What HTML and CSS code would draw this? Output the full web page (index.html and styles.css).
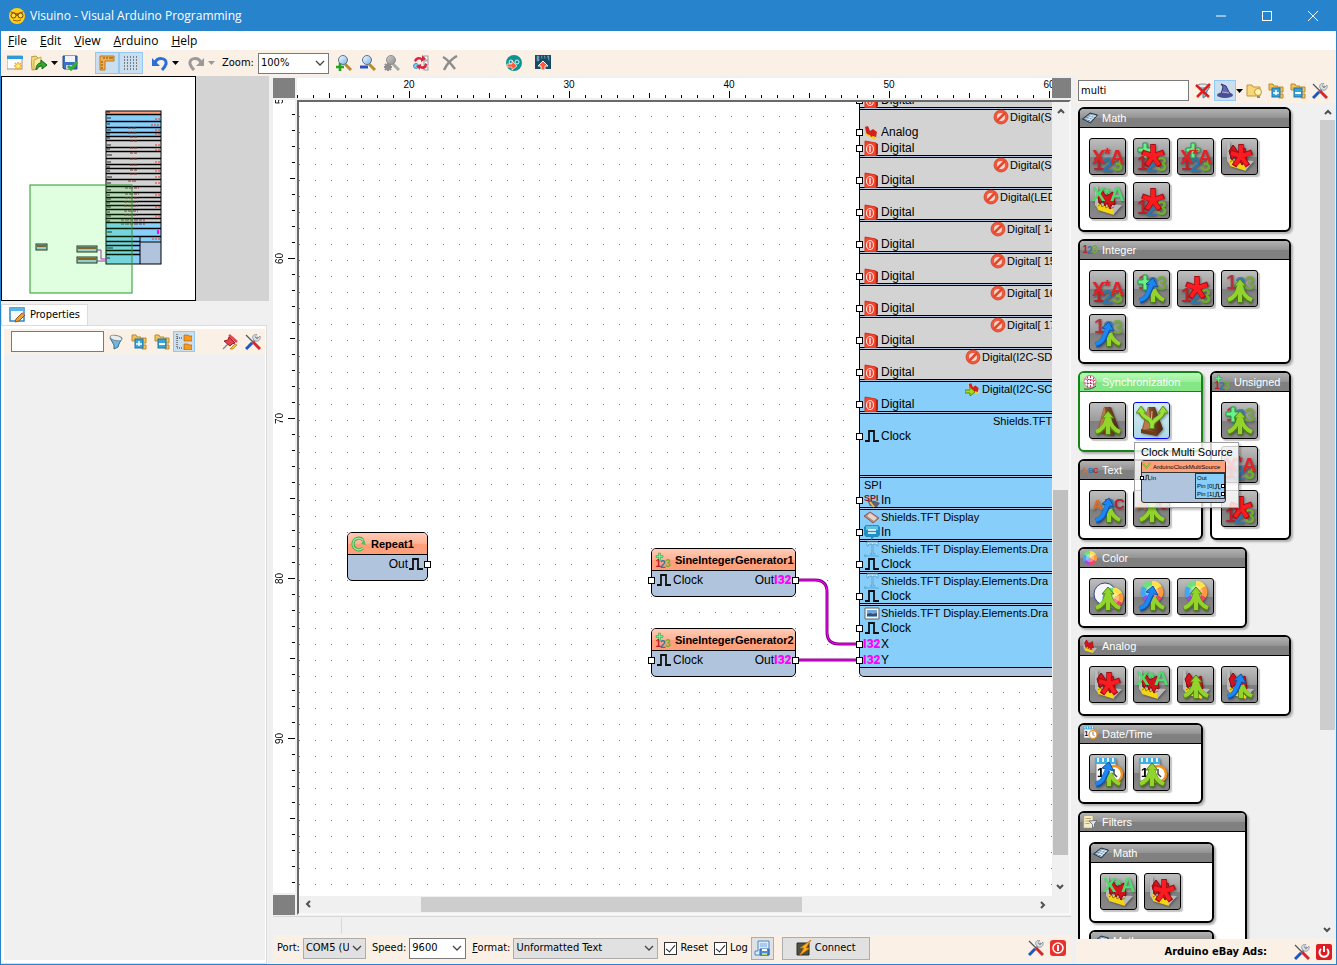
FILE: index.html
```html
<!doctype html>
<html lang="en">
<head>
  <meta charset="UTF-8">
  <meta name="viewport" content="width=device-width, initial-scale=1.0">
  <title>Visuino - Visual Arduino Programming</title>
  <link rel="stylesheet" href="styles.css">
</head>
<body>
  <svg class="paints" aria-hidden="true">
    <defs>
      <linearGradient id="g-lens" x1="0" y1="0" x2="1" y2="1"><stop offset="0" stop-color="#fff"/><stop offset="1" stop-color="#6fb0e8"/></linearGradient>
      <linearGradient id="g-gray" x1="0" y1="0" x2="1" y2="1"><stop offset="0" stop-color="#d0d0d0"/><stop offset="1" stop-color="#8c8c8c"/></linearGradient>
      <linearGradient id="g-wood" x1="0" y1="0" x2="1" y2="0"><stop offset="0" stop-color="#a5673c"/><stop offset="1" stop-color="#4a2410"/></linearGradient>
      <pattern id="dots" width="16" height="16" patternUnits="userSpaceOnUse" y="14"><rect width="1" height="1" fill="#808080"/></pattern>
    </defs>
  </svg>
  <svg class="sprite" aria-hidden="true">
    <!-- toolbar icons, 16px -->
    <symbol id="i-new" viewBox="0 0 16 16"><rect x="0" y="1" width="15" height="13" fill="#fff" stroke="#8a9aa8"/><rect x="0" y="1" width="16" height="3" fill="#2b9cd8"/><path d="M11 7v8M7 11h8M8 8l6 6M14 8l-6 6" stroke="#ffa21f" stroke-width="1.500"/><circle cx="11" cy="11" r="2" fill="#fff27a"/></symbol>
    <symbol id="i-open" viewBox="0 0 16 16"><path d="M0 2l5-1 2 2v11l-6 1z" fill="#f2d878" stroke="#b99a3c"/><path d="M3 15V5l7-3v9z" fill="#f9eca8" stroke="#c9aa48"/><path d="M5 15c0-5 2-7 5-7V5l6 5-5 4v-3c-3 0-4 1-6 4z" fill="#2faa30" stroke="#176a18"/></symbol>
    <symbol id="i-save" viewBox="0 0 16 16"><path d="M1 1h14v13H2l-1-1z" fill="#3f6fc0" stroke="#274a8a"/><path d="M3 1h10v6H3z" fill="#eef4fb"/><path d="M4 10h7v4H4z" fill="#c9d6e8"/><path d="M6 11l3 3 6-7" fill="none" stroke="#35b12f" stroke-width="3"/></symbol>
    <symbol id="i-ruler" viewBox="0 0 16 16"><path d="M1 1h14v5H6v9H1z" fill="#f3b04c" stroke="#bb7620"/><path d="M5 2v2M8 2v2M11 2v2M13 2v2M2 7h2M2 10h2M2 13h2" stroke="#7c4a0c"/></symbol>
    <symbol id="i-grid" viewBox="0 0 16 16"><path d="M1 2h15M1 5h15M1 8h15M1 11h15M1 14h15" stroke="#222" stroke-dasharray="1 2"/></symbol>
    <symbol id="i-undo" viewBox="0 0 16 16"><path d="M0 3v8h8z" fill="#2a6fd6"/><path d="M3 8c2-6 12-6 11 1-1 3-2 4-4 6" fill="none" stroke="#2a6fd6" stroke-width="3"/></symbol>
    <symbol id="i-redo" viewBox="0 0 16 16"><path d="M16 3v8H8z" fill="#9a9a9a"/><path d="M13 8C11 2 1 2 2 9c1 3 2 4 4 6" fill="none" stroke="#9a9a9a" stroke-width="3"/></symbol>
    <symbol id="i-zoomin" viewBox="0 0 16 16"><path d="M9 9l6 6" stroke="#b98a2e" stroke-width="3"/><circle cx="7" cy="5" r="4.500" fill="url(#g-lens)" stroke="#5a7188"/><path d="M4 8v8M0 12h8" stroke="#1fa51f" stroke-width="2.600"/></symbol>
    <symbol id="i-zoomout" viewBox="0 0 16 16"><path d="M9 9l6 6" stroke="#b98a2e" stroke-width="3"/><circle cx="7" cy="5" r="4.500" fill="url(#g-lens)" stroke="#5a7188"/><path d="M0 12h8" stroke="#2a4fc0" stroke-width="3"/></symbol>
    <symbol id="i-zoomoff" viewBox="0 0 16 16"><path d="M9 9l6 6" stroke="#a8a8a8" stroke-width="3"/><circle cx="7" cy="5" r="4.500" fill="url(#g-gray)" stroke="#8d8d8d"/><path d="M1 9l6 6M7 9l-6 6M4 8v8M0 12h8" stroke="#8d8d8d" stroke-width="2"/></symbol>
    <symbol id="i-swap" viewBox="0 0 16 16"><circle cx="3" cy="11" r="2.500" fill="#7fd0f2" stroke="#2f9fd0"/><rect x="11" y="1" width="4" height="4" fill="#fff" stroke="#999"/><rect x="11" y="6" width="4" height="4" fill="#fff" stroke="#999"/><rect x="11" y="12" width="4" height="3" fill="#fff" stroke="#999"/><path d="M1 6c1-4 5-5 8-3V0l4 4-5 3V5C5 4 4 5 3 7zM14 9c0 5-4 6-7 4v2l-4-4 5-2v2c3 1 4-1 4-3z" fill="#dd2340"/></symbol>
    <symbol id="i-delete" viewBox="0 0 16 16"><path d="M1 2c4 2 9 8 12 12M15 1C9 4 5 9 2 15" fill="none" stroke="#8c8c8c" stroke-width="2.500"/></symbol>
    <symbol id="i-arduino" viewBox="0 0 16 16"><circle cx="8" cy="8" r="8" fill="#0f9295"/><circle cx="5" cy="7" r="2" fill="none" stroke="#d8f2f2"/><circle cx="11" cy="7" r="2" fill="none" stroke="#d8f2f2"/><path d="M1 9h5V6l5 5-5 4v-3H1z" fill="#ff5a36" stroke="#fff3ee" stroke-width=".7"/></symbol>
    <symbol id="i-upload" viewBox="0 0 16 16"><path d="M0 0h16v14H0z" fill="#164a66"/><path d="M2 1h2v5H2zM6 1h1v3M9 1h1v3M12 1h2v5" fill="#6d9cb3" stroke="#6d9cb3" stroke-width=".5"/><path d="M6 15v-4H3l5-5 5 5h-3v4z" fill="#ff5a36" stroke="#fff3ee"/></symbol>
    <symbol id="i-props" viewBox="0 0 16 16"><path d="M1 1h14v13H1z" fill="#f5fafd" stroke="#2e86be" stroke-width="1.500"/><path d="M1 1h14v3H1z" fill="#56b4e6"/><path d="M6 15l1-3 6-6 3 2-6 6z" fill="#f0a030" stroke="#97591a"/><path d="M13 6l2-1 1 2-1 1z" fill="#d26fb4"/></symbol>
    <symbol id="i-funnel" viewBox="0 0 16 16"><path d="M2 4l4 7v4l4-2 1-3 3-6z" fill="#6fb9e0" stroke="#376d92"/><ellipse cx="8" cy="4" rx="6" ry="2.500" fill="#e8edf0" stroke="#7b8a94" transform="rotate(12 8 4)"/></symbol>
    <symbol id="i-expand" viewBox="0 0 16 16"><path d="M1 1h4l1 2h4v4H1z" fill="#f4c25c" stroke="#c08a26"/><path d="M11 4h4v5h-4zM11 11h4v4h-4z" fill="#f4c25c" stroke="#c08a26"/><rect x="4" y="5" width="8" height="9" fill="#37a4da" stroke="#1d74a8"/><path d="M8 7v5M5 10h6" stroke="#fff" stroke-width="1.500"/></symbol>
    <symbol id="i-collapse" viewBox="0 0 16 16"><path d="M1 1h4l1 2h4v4H1z" fill="#f4c25c" stroke="#c08a26"/><path d="M11 4h4v5h-4zM11 11h4v4h-4z" fill="#f4c25c" stroke="#c08a26"/><rect x="4" y="5" width="8" height="9" fill="#37a4da" stroke="#1d74a8"/><path d="M5 10h6" stroke="#fff" stroke-width="2"/></symbol>
    <symbol id="i-tree" viewBox="0 0 16 16"><path d="M1 0v14M1 4h6M1 14h6" fill="none" stroke="#333" stroke-dasharray="1 1"/><path d="M8 1h4l1 1h3v5H8zM8 10h4l1 1h3v5H8z" fill="#f79a1c" stroke="#b7630a" stroke-width=".7"/></symbol>
    <symbol id="i-pin" viewBox="0 0 16 16"><path d="M1 15l6-6" stroke="#888" stroke-width="1.500"/><path d="M7 3l6 6-3 1-2 2-6-5 4-1z" fill="#e3434c" stroke="#9d1c27"/><path d="M7 1l8 7" stroke="#e3434c" stroke-width="2.500"/><path d="M8 15l5-5 2 1-4 4z" fill="#f2c53d" stroke="#8e6c14" stroke-width=".6"/></symbol>
    <symbol id="i-tools" viewBox="0 0 16 16"><path d="M4 12L13 3" stroke="#8a939c" stroke-width="2"/><path d="M15 2l-3 3-2-2 2-3c-4 0-5 3-4 5l2 2c3 1 6-1 5-5z" fill="#d8dde2" stroke="#7b848d" stroke-width=".7"/><path d="M1 15l6-6" stroke="#1f56c4" stroke-width="3"/><path d="M1 1l7 7" stroke="#555" stroke-width="1.300"/><path d="M8 8l7 7" stroke="#d02a2a" stroke-width="3"/></symbol>
    <symbol id="i-clear" viewBox="0 0 16 16"><path d="M3 3l5 6v6l3-2 1-5 3-4z" fill="#8cc6e4" stroke="#54778e"/><ellipse cx="8" cy="3" rx="6" ry="2" fill="#e3e8ea" stroke="#7b8a94"/><path d="M1 2l13 12M15 1L2 14" stroke="#d8201c" stroke-width="2.500"/></symbol>
    <symbol id="i-wizard" viewBox="0 0 16 16"><path d="M4 11L6 4 4 1l5 2 4 8z" fill="#6668b0" stroke="#33346e"/><ellipse cx="8" cy="12" rx="8" ry="3" fill="#4c4e94"/><path d="M5 9l7 1" stroke="#b7b9e6"/></symbol>
    <symbol id="i-folder" viewBox="0 0 16 16"><path d="M1 2h5l1 2h7v9H1z" fill="#f8d67c" stroke="#c79630"/><circle cx="12" cy="9" r="3.500" fill="#fff3b0" stroke="#c79630"/><path d="M11 13h3v2h-3z" fill="#8a8a8a"/></symbol>
    <symbol id="i-power" viewBox="0 0 16 16"><rect width="16" height="16" rx="2" fill="#dd1d23"/><path d="M5 5a4.500 4.500 0 1 0 6 0" fill="none" stroke="#fff" stroke-width="2"/><path d="M8 2v6" stroke="#fff" stroke-width="2"/></symbol>
    <symbol id="i-stop" viewBox="0 0 16 16"><rect width="16" height="16" rx="3" fill="#e8302c"/><circle cx="8" cy="8" r="5" fill="none" stroke="#fff" stroke-width="1.500"/><path d="M8 5v6" stroke="#fff" stroke-width="2"/></symbol>
    <symbol id="i-log" viewBox="0 0 16 16"><path d="M4 1h11v14H1V11h3z" fill="#dcebfa" stroke="#4b86cc"/><path d="M6 4h7M6 6h7" stroke="#79aae0"/><path d="M6 9h9v6H6z" fill="#4f8ed8" stroke="#2b5fa4"/><path d="M8 9h5v2H8z" fill="#fff"/><path d="M8 13h5v2H8z" fill="#b9dd6c"/></symbol>
    <symbol id="i-connect" viewBox="0 0 16 16"><path d="M1 3h12v12H1z" fill="#4a5140" stroke="#2a2f25"/><path d="M15 0L4 8h4l-5 8L14 8h-4z" fill="#ffb31a" stroke="#c2660a" stroke-width=".7"/></symbol>
    <symbol id="i-caret" viewBox="0 0 7 4"><path d="M0 0h7L3.500 4z" fill="currentColor"/></symbol>
    <symbol id="i-chevron" viewBox="0 0 10 6"><path d="M1 1l4 4 4-4" fill="none" stroke="currentColor" stroke-width="1.300"/></symbol>
    <symbol id="i-arrow" viewBox="0 0 8 6"><path d="M1 5l3-3 3 3" fill="none" stroke="#505050" stroke-width="2"/></symbol>

    <!-- pin and slot icons -->
    <symbol id="p-clock" viewBox="0 0 16 16"><path d="M1 13h4V3h5v10h5" fill="none" stroke="#111" stroke-width="1.800"/></symbol>
    <symbol id="p-digital" viewBox="0 0 16 16"><path d="M1 1l11 2v13H1z" fill="#f4452c" stroke="#d9301a"/><path d="M12 3l2 1v10l-2 2z" fill="#b32312"/><ellipse cx="6" cy="9" rx="3.500" ry="4.500" fill="none" stroke="#ffe0da" stroke-width="1.200"/><path d="M6 6v6" stroke="#ffe0da" stroke-width="1.500"/></symbol>
    <symbol id="p-analog" viewBox="0 0 16 16"><path d="M0 1l1 9 12 5 3-2" fill="#ccc"/><path d="M1 8l10 4v4L2 11z" fill="#f5d312"/><path d="M1 3l3-1 2 5 3-2 4 3-1 5-3-1-2 1-1-2-3-1-1-2z" fill="#d42020"/></symbol>
    <symbol id="p-out" viewBox="0 0 16 16"><use href="#p-analog" x="3" width="13" height="14"/><path d="M0 9h5V6l5 5-5 4v-3H0z" fill="#a6d820" stroke="#5d8a10"/></symbol>
    <symbol id="p-no" viewBox="0 0 16 16"><circle cx="8" cy="8" r="5.500" fill="#fbd9d2" stroke="#f0593c" stroke-width="3"/><circle cx="8" cy="8" r="7" fill="none" stroke="#c93a22" stroke-width=".7"/><path d="M4 12l8-8" stroke="#e0492e" stroke-width="2.500"/></symbol>
    <symbol id="p-spi" viewBox="0 0 16 16"><path d="M3 8l8 1 5 2-3 4-7-1z" fill="#5c5f73"/><path d="M6 10l4 5" stroke="#f0c040" stroke-width="2"/><text x="0" y="9" class="t-spi">SPI</text></symbol>
    <symbol id="p-chip" viewBox="0 0 16 16"><path d="M0 7l6-4 9 6-6 5z" fill="#b98577" stroke="#8a6055"/><path d="M3 7l3-3 7 5-3 3z" fill="#e6d5cf"/></symbol>
    <symbol id="p-chat" viewBox="0 0 16 16"><path d="M2 1h12l2 2v8l-2 2h-4l-3 3v-3H2l-2-2V3z" fill="#1f8fc4"/><path d="M2 2h12v4H2z" fill="#5fc0e6"/><path d="M4 6h8M4 9h8" stroke="#fff" stroke-width="1.300"/></symbol>
    <symbol id="p-text" viewBox="0 0 16 16"><path d="M3 1h11v4h-1l-1-2H9v9l2 1H6l2-1V3H5L4 5H3z" fill="#dff2fd" stroke="#5aa5d8"/><path d="M0 15h15M1 13v3" stroke="#5aa5d8"/></symbol>
    <symbol id="p-pic" viewBox="0 0 16 16"><path d="M1 3h14v11H1z" fill="#f6f6f6" stroke="#666"/><path d="M3 5h10v7H3z" fill="#6fa8d8"/><path d="M3 9l3-1 3 1 4-1v3H3z" fill="#34506c"/></symbol>
    <symbol id="p-repeat" viewBox="0 0 16 16"><path d="M12 4C8 0 2 3 2 8s6 8 10 4" fill="none" stroke="#2faa3c" stroke-width="3"/><path d="M12 4C8 0 2 3 2 8s6 8 10 4" fill="none" stroke="#a9eab0" stroke-width="1.200"/><path d="M10 8l5 1-2-6z" fill="#4fc45a"/></symbol>

    <!-- palette icons, 32px -->
    <symbol id="c-123" viewBox="0 0 32 32"><text x="1" y="29" class="t-num n1">1</text><text x="10" y="31" class="t-num n2">2</text><text x="20" y="30" class="t-num n3">3</text></symbol>
    <symbol id="c-123up" viewBox="0 0 32 32"><g opacity=".8"><text x="2" y="16" class="t-num n1">1</text><text x="11" y="18" class="t-num n2">2</text><text x="20" y="17" class="t-num n3">3</text></g></symbol>
    <symbol id="c-star" viewBox="0 0 32 32"><path d="M17 3v12L6 11M17 15l11-4M17 15l-7 10M17 15l7 10" fill="none" stroke="#a50e12" stroke-width="5.500"/><path d="M17 4v11L7 12M17 15l10-3M17 15l-6 9M17 15l6 9" fill="none" stroke="#fb1c22" stroke-width="4"/></symbol>
    <symbol id="c-xa" viewBox="0 0 32 32"><g class="t-xa xa-red"><text x="0" y="23">X</text><text x="12" y="19" class="t-mul">*</text><text x="18" y="23">A</text></g></symbol>
    <symbol id="c-xag" viewBox="0 0 32 32"><g class="t-xa xa-green"><text x="0" y="16">X</text><text x="12" y="15" class="t-mul">*</text><text x="18" y="16">A</text></g></symbol>
    <symbol id="c-plus" viewBox="0 0 32 32"><path d="M7 2h4v5h5v4h-5v6H7v-6H2V7h5z" fill="#6cf08a" stroke="#23994a"/></symbol>
    <symbol id="c-analog" viewBox="0 0 32 32"><path d="M3 1h3v17l24 2-8 9L6 24 3 20z" fill="#b9b9b9"/><path d="M5 18l16 6 1 6L6 25z" fill="#f4d414"/><path d="M6 21l3-2 1 3 3-2 1 3 3-2 1 3 4-2" stroke="#9b7a05" fill="none"/><path d="M5 10l4-6 5 7 7-4 2 13-3-1-2 5-3-6-2 3-2-6-3 4z" fill="#d4141c" stroke="#8f0a10"/></symbol>
    <symbol id="c-merge" viewBox="0 0 32 32"><path d="M4 28C9 26 14 21 15 14M28 28C23 26 18 21 17 14M16 30V13" fill="none" stroke="#4f7d14" stroke-width="5.500"/><path d="M16 6l-6 7h12z" fill="#93d42c" stroke="#4f7d14"/><path d="M4 27C9 25 14 20 15 13M28 27C23 25 18 20 17 13M16 29V11" fill="none" stroke="#93d42c" stroke-width="4"/></symbol>
    <symbol id="c-mergeb" viewBox="0 0 32 32"><path d="M28 28C23 26 19 21 18 16M17 30V16" fill="none" stroke="#4f7d14" stroke-width="5.500"/><path d="M28 27C23 25 19 20 18 16M17 29V16" fill="none" stroke="#93d42c" stroke-width="4"/><path d="M4 28c8-2 8-9 12-15" fill="none" stroke="#0d53a8" stroke-width="5.500"/><path d="M17 5l-7 6 12 3z" fill="#1c86f2" stroke="#0d53a8"/><path d="M4 27c8-2 8-9 12-16" fill="none" stroke="#1c86f2" stroke-width="4"/></symbol>
    <symbol id="c-split" viewBox="0 0 32 32"><path d="M16 24v-4C15 13 6 14 5 7M16 20C17 13 26 14 27 7" fill="none" stroke="#5c9416" stroke-width="5"/><path d="M5 1L0 8h10zM27 1l-5 7h10z" fill="#9be03a" stroke="#5c9416"/><path d="M16 23v-4C15 12 6 13 5 6M16 20C17 13 26 14 27 6" fill="none" stroke="#9be03a" stroke-width="3.500"/></symbol>
    <symbol id="c-metro" viewBox="0 0 32 32"><path d="M12 2h7l8 22-6 7-16-4z" fill="url(#g-wood)"/><path d="M12 2l1 1 2 20-8 2z" fill="#b87b4e"/><path d="M16 6l-1 17" stroke="#e8c38c"/><path d="M5 24l16 4v3L5 28z" fill="#6c3a1c"/></symbol>
    <symbol id="c-abc" viewBox="0 0 32 32"><text x="0" y="17" class="t-abc n1o">A</text><text x="12" y="16" class="t-abc n2">B</text><text x="22" y="16" class="t-abc n1">C</text></symbol>
    <symbol id="c-wheel" viewBox="0 0 32 32"><path d="M16 16V2a14 14 0 0 1 12 7z" fill="#ffe14a"/><path d="M16 16l12-7a14 14 0 0 1 0 14z" fill="#ff9a3c"/><path d="M16 16l12 7a14 14 0 0 1-12 7z" fill="#f2446a"/><path d="M16 16v14A14 14 0 0 1 4 23z" fill="#a04ae8"/><path d="M16 16L4 23a14 14 0 0 1 0-14z" fill="#3fa8f4"/><path d="M16 16L4 9a14 14 0 0 1 12-7z" fill="#6fe07a"/><circle cx="16" cy="16" r="8" fill="#fff" opacity=".35"/></symbol>
    <symbol id="c-white" viewBox="0 0 32 32"><circle cx="13" cy="13" r="11" fill="#f4f6fb" stroke="#3a4a8c"/></symbol>
    <symbol id="c-date" viewBox="0 0 32 32"><path d="M4 4h20v20H4z" fill="#f4f4f4" stroke="#888"/><path d="M3 1h21v6H3z" fill="#3fb0e4"/><path d="M6 1v4M11 1v4M16 1v4M21 1v4" stroke="#e2f4fc" stroke-width="2"/><text x="5" y="20" class="t-day">1</text><circle cx="22" cy="17" r="8" fill="#fff" stroke="#f0921e" stroke-width="2.500"/><path d="M22 12v5l3 3" fill="none" stroke="#444" stroke-width="1.500"/></symbol>
    <symbol id="c-calc" viewBox="0 0 32 32"><path d="M1 18L16 6l15 4-14 16z" fill="#6f90ad" stroke="#25394c" stroke-width="2"/><path d="M7 17l12 3M11 13l12 4M15 10l12 3M10 21l12-12M15 23L27 10" stroke="#e8f2fa" stroke-width="2"/></symbol>
    <symbol id="c-sync" viewBox="0 0 32 32"><circle cx="16" cy="15" r="12" fill="#fff" stroke="#d67a98" stroke-width="2"/><path d="M6 10l20 3M5 18l22 2M11 5v22M17 4v24M23 7v18" stroke="#d0305e" stroke-width="2" stroke-dasharray="4 2"/><path d="M4 30c8 1 17 0 24-6" stroke="#444" stroke-width="2" fill="none"/></symbol>
    <symbol id="c-filter" viewBox="0 0 32 32"><path d="M4 3h18v25H3z" fill="#f7ecc8" stroke="#a08a50"/><path d="M7 9h11M7 14h11M7 19h8" stroke="#b9a368" stroke-width="2"/><path d="M14 14l7 7v7l4-3v-5l5-7z" fill="#e3e8ec" stroke="#6c7780" stroke-width="2"/></symbol>
  </svg>

  <header class="titlebar">
    <svg class="logo" viewBox="0 0 16 16"><circle cx="8" cy="8" r="8" fill="#ffd014"/><path d="M1 3l6 2h2l6-2-4 5H5z" fill="#b8650c"/><circle cx="4.500" cy="7.500" r="2.500" fill="#ffd94a" stroke="#6a4306"/><circle cx="11.500" cy="7.500" r="2.500" fill="#ffd94a" stroke="#6a4306"/><path d="M4 12q4 2 8 0" fill="none" stroke="#a8570a"/></svg>
    <h1 class="window-title">Visuino - Visual Arduino Programming</h1>
    <button class="win-btn" aria-label="Minimize"><svg viewBox="0 0 10 10"><path d="M0 5h10" stroke="#fff"/></svg></button>
    <button class="win-btn" aria-label="Maximize"><svg viewBox="0 0 10 10"><path d="M0 0h10v10H0z" fill="none" stroke="#fff" stroke-width="2"/></svg></button>
    <button class="win-btn" aria-label="Close"><svg viewBox="0 0 10 10"><path d="M0 0l10 10M10 0L0 10" stroke="#fff"/></svg></button>
  </header>

  <nav class="menubar">
    <a href="#"><u>F</u>ile</a>
    <a href="#"><u>E</u>dit</a>
    <a href="#"><u>V</u>iew</a>
    <a href="#"><u>A</u>rduino</a>
    <a href="#"><u>H</u>elp</a>
  </nav>

  <div class="toolbar main-toolbar">
    <div class="tool-group">
      <button class="tool" aria-label="New"><svg><use href="#i-new"/></svg></button>
      <button class="tool" aria-label="Open"><svg><use href="#i-open"/></svg></button>
      <button class="tool-caret" aria-label="Recent files"><svg><use href="#i-caret"/></svg></button>
      <button class="tool" aria-label="Save"><svg><use href="#i-save"/></svg></button>
    </div>
    <div class="tool-group gap-m">
      <button class="tool is-on" aria-label="Rulers"><svg><use href="#i-ruler"/></svg></button>
      <button class="tool is-on" aria-label="Grid"><svg><use href="#i-grid"/></svg></button>
    </div>
    <div class="tool-group gap-s">
      <button class="tool" aria-label="Undo"><svg><use href="#i-undo"/></svg></button>
      <button class="tool-caret" aria-label="Undo list"><svg><use href="#i-caret"/></svg></button>
    </div>
    <div class="tool-group gap-s">
      <button class="tool" aria-label="Redo"><svg><use href="#i-redo"/></svg></button>
      <button class="tool-caret is-off" aria-label="Redo list"><svg><use href="#i-caret"/></svg></button>
    </div>
    <label class="zoom-label" for="zoom">Zoom:</label>
    <span class="select zoom-select">
      <select id="zoom"><option>100%</option></select>
      <svg><use href="#i-chevron"/></svg>
    </span>
    <div class="tool-group">
      <button class="tool" aria-label="Zoom in"><svg><use href="#i-zoomin"/></svg></button>
      <button class="tool" aria-label="Zoom out"><svg><use href="#i-zoomout"/></svg></button>
      <button class="tool" aria-label="Reset zoom"><svg><use href="#i-zoomoff"/></svg></button>
    </div>
    <div class="tool-group gap-s">
      <button class="tool" aria-label="Rearrange"><svg><use href="#i-swap"/></svg></button>
    </div>
    <div class="tool-group gap-s">
      <button class="tool" aria-label="Delete"><svg><use href="#i-delete"/></svg></button>
    </div>
    <div class="tool-group gap-l">
      <button class="tool" aria-label="Arduino IDE"><svg><use href="#i-arduino"/></svg></button>
    </div>
    <div class="tool-group gap-s">
      <button class="tool" aria-label="Upload"><svg><use href="#i-upload"/></svg></button>
    </div>
  </div>

  <main class="workspace">
    <aside class="left">
      <div class="navigator">
        <svg class="map" viewBox="1 0 195 225">
          <rect x="1" y="0" width="195" height="225" fill="#fff"/>
          <rect x="106" y="35" width="55" height="153" fill="#d3d3d3"/>
          <path d="M106 35h55v4h-55z" fill="#ffa07a"/>
          <path d="M106 39h55v21h-55zM106 147h55v19h-55z" fill="#87cefa"/>
          <path d="M106 160h34v28h-34z" fill="#87cefa"/>
          <path d="M140 166h21v22h-21z" fill="#b0c4de"/>
          <path d="M106 38h55M106 45h55M106 51h55M106 56h55M106 60h55M106 64h55M106 71h55M106 75h55M106 82h55M106 88h55M106 92h55M106 97h55M106 103h55M106 110h55M106 116h55M106 121h55M106 125h55M106 129h55M106 133h55M106 138h55M106 142h55M106 146h55M106 152h55M106 160h55M106 165h34M106 169h34M106 174h34M106 178h34" transform="translate(0 .5)" stroke="#000" stroke-width="1.400"/>
          <path d="M107 36h3M107 42h4M107 48h3M107 54h4M107 58h3M107 62h3M107 69h4M107 73h3M107 79h5M107 86h4M107 91h3M107 95h3M107 101h5M107 107h4M107 114h4M107 119h3M107 123h4M107 127h3M107 131h4M107 136h3M107 140h4M107 145h3M107 156h5M107 172h6M107 182h3" stroke="#222"/>
          <path d="M128 52h9M128 57h10M130 61h7M130 65h7M130 72h7M130 77h7M130 83h7M130 89h7M130 94h7M130 98h7M128 105h9M125 112h14M125 118h14M125 122h14M124 126h14M124 130h14M124 135h14M124 139h14M121 144h24M121 148h24" stroke="#743a34" stroke-dasharray="3 1 4 1"/>
          <path d="M155 43h5M151 49h9M155 54h5M155 58h5M155 69h5M155 74h5M155 86h5M155 95h5M155 101h5M155 107h5M155 119h5M155 131h5M155 140h5M152 163h8" stroke="#e23a20" stroke-dasharray="2 1"/>
          <rect x="106" y="35" width="55" height="153" fill="none" stroke="#000"/>
          <path d="M140 161v27M140 166h21" stroke="#000"/>
          <path d="M158 154v4" stroke="#f0f" stroke-width="2"/>
          <g fill="#b0c4de" stroke="#222"><rect x="36" y="168" width="11" height="6"/><rect x="77" y="170" width="20" height="6"/><rect x="77" y="181" width="20" height="6"/></g>
          <path d="M37 170h9M78 172h18M78 183h18" stroke="#96502c" stroke-width="2"/>
          <path d="M97 174h4v9h6M97 185h10" fill="none" stroke="#c01cc0"/>
          <rect x="30" y="109" width="102" height="108" fill="#0f0" fill-opacity=".12" stroke="#289628"/>
          <rect x="1" y="0" width="194" height="224" transform="translate(.5 .5)" fill="none" stroke="#000"/>
        </svg>
      </div>
      <div class="tabs"><button class="tab"><svg><use href="#i-props"/></svg>Properties</button></div>
      <section class="props">
        <div class="toolbar props-toolbar">
          <input class="field props-filter" type="text" aria-label="Filter properties">
          <button class="tool" aria-label="Filter"><svg><use href="#i-funnel"/></svg></button>
          <button class="tool" aria-label="Expand all"><svg><use href="#i-expand"/></svg></button>
          <button class="tool" aria-label="Collapse all"><svg><use href="#i-collapse"/></svg></button>
          <button class="tool is-on" aria-label="Tree view"><svg><use href="#i-tree"/></svg></button>
          <span class="spacer"></span>
          <button class="tool" aria-label="Pin"><svg><use href="#i-pin"/></svg></button>
          <button class="tool" aria-label="Options"><svg><use href="#i-tools"/></svg></button>
        </div>
        <div class="props-body"></div>
      </section>
    </aside>

    <section class="center">
      <div class="editor">
        <div class="corner"></div>
        <div class="ruler-top"><span>20</span><span>30</span><span>40</span><span>50</span><span>60</span></div>
        <div class="corner corner-end"></div>
        <div class="ruler-side">
          <div class="ruler-left"><span>50</span><span>60</span><span>70</span><span>80</span><span>90</span></div>
          <div class="corner"></div>
        </div>
        <div class="frame">
          <div class="canvas">
            <svg class="backdrop">
              <rect width="100%" height="100%" fill="url(#dots)"/>
              <g fill="none" stroke="#8b008b" stroke-width="3"><path d="M496 478h20q12 0 12 12v40q0 12 12 12h20"/><path d="M496 558h64"/></g>
              <g fill="none" stroke="#f0f"><path d="M496 478h20q12 0 12 12v40q0 12 12 12h20"/><path d="M496 558h64"/></g>
            </svg>

            <div class="node node-repeat">
              <h2 class="node-title"><svg><use href="#p-repeat"/></svg>Repeat1</h2>
              <div class="pins"><span class="pin out">Out<svg><use href="#p-clock"/></svg><i class="port"></i></span></div>
            </div>

            <div class="node node-sine1">
              <h2 class="node-title"><svg viewBox="0 0 32 32"><use href="#c-plus"/><use href="#c-123"/></svg>SineIntegerGenerator1</h2>
              <div class="pins">
                <span class="pin"><i class="port"></i><svg><use href="#p-clock"/></svg>Clock</span>
                <span class="pin out">Out<b class="i32">I32</b><i class="port"></i></span>
              </div>
            </div>

            <div class="node node-sine2">
              <h2 class="node-title"><svg viewBox="0 0 32 32"><use href="#c-plus"/><use href="#c-123"/></svg>SineIntegerGenerator2</h2>
              <div class="pins">
                <span class="pin"><i class="port"></i><svg><use href="#p-clock"/></svg>Clock</span>
                <span class="pin out">Out<b class="i32">I32</b><i class="port"></i></span>
              </div>
            </div>

            <div class="board">
              <div class="slot">
                <div class="slot-title"></div>
                <span class="pin"><i class="port"></i><svg><use href="#p-digital"/></svg>Digital</span>
              </div>
              <div class="slot slot-2">
                <div class="slot-title at-134"><svg><use href="#p-no"/></svg>Digital(S</div>
                <span class="pin"><i class="port"></i><svg><use href="#p-analog"/></svg>Analog</span>
                <span class="pin"><i class="port"></i><svg><use href="#p-digital"/></svg>Digital</span>
              </div>
              <div class="slot">
                <div class="slot-title at-134"><svg><use href="#p-no"/></svg>Digital(S</div>
                <span class="pin"><i class="port"></i><svg><use href="#p-digital"/></svg>Digital</span>
              </div>
              <div class="slot">
                <div class="slot-title at-123"><svg><use href="#p-no"/></svg>Digital(LED</div>
                <span class="pin"><i class="port"></i><svg><use href="#p-digital"/></svg>Digital</span>
              </div>
              <div class="slot">
                <div class="slot-title at-130"><svg><use href="#p-no"/></svg>Digital[ 14</div>
                <span class="pin"><i class="port"></i><svg><use href="#p-digital"/></svg>Digital</span>
              </div>
              <div class="slot">
                <div class="slot-title at-130"><svg><use href="#p-no"/></svg>Digital[ 15</div>
                <span class="pin"><i class="port"></i><svg><use href="#p-digital"/></svg>Digital</span>
              </div>
              <div class="slot">
                <div class="slot-title at-130"><svg><use href="#p-no"/></svg>Digital[ 16</div>
                <span class="pin"><i class="port"></i><svg><use href="#p-digital"/></svg>Digital</span>
              </div>
              <div class="slot">
                <div class="slot-title at-130"><svg><use href="#p-no"/></svg>Digital[ 17</div>
                <span class="pin"><i class="port"></i><svg><use href="#p-digital"/></svg>Digital</span>
              </div>
              <div class="slot">
                <div class="slot-title at-105"><svg><use href="#p-no"/></svg>Digital(I2C-SD</div>
                <span class="pin"><i class="port"></i><svg><use href="#p-digital"/></svg>Digital</span>
              </div>
              <div class="slot is-used">
                <div class="slot-title at-105"><svg><use href="#p-out"/></svg>Digital(I2C-SC</div>
                <span class="pin"><i class="port"></i><svg><use href="#p-digital"/></svg>Digital</span>
              </div>
              <div class="slot slot-3 is-used">
                <div class="slot-title at-134">Shields.TFT</div>
                <span class="pin"><i class="port"></i><svg><use href="#p-clock"/></svg>Clock</span>
              </div>
              <div class="slot is-used">
                <div class="slot-title at-5">SPI</div>
                <span class="pin"><i class="port"></i><svg><use href="#p-spi"/></svg>In</span>
              </div>
              <div class="slot is-used">
                <div class="slot-title at-5"><svg><use href="#p-chip"/></svg>Shields.TFT Display</div>
                <span class="pin"><i class="port"></i><svg><use href="#p-chat"/></svg>In</span>
              </div>
              <div class="slot is-used">
                <div class="slot-title at-5"><svg><use href="#p-text"/></svg>Shields.TFT Display.Elements.Dra</div>
                <span class="pin"><i class="port"></i><svg><use href="#p-clock"/></svg>Clock</span>
              </div>
              <div class="slot is-used">
                <div class="slot-title at-5"><svg><use href="#p-text"/></svg>Shields.TFT Display.Elements.Dra</div>
                <span class="pin"><i class="port"></i><svg><use href="#p-clock"/></svg>Clock</span>
              </div>
              <div class="slot slot-3 is-used">
                <div class="slot-title at-5"><svg><use href="#p-pic"/></svg>Shields.TFT Display.Elements.Dra</div>
                <span class="pin"><i class="port"></i><svg><use href="#p-clock"/></svg>Clock</span>
                <span class="pin"><i class="port"></i><b class="i32">I32</b>X</span>
                <span class="pin"><i class="port"></i><b class="i32">I32</b>Y</span>
              </div>
            </div>
          </div>
          <div class="vscroll canvas-vscroll">
            <button aria-label="Scroll up"><svg><use href="#i-arrow"/></svg></button>
            <div class="track"><div class="thumb"></div></div>
            <button class="flip" aria-label="Scroll down"><svg><use href="#i-arrow"/></svg></button>
          </div>
          <div class="hscroll">
            <button class="to-left" aria-label="Scroll left"><svg><use href="#i-arrow"/></svg></button>
            <div class="track"><div class="thumb"></div></div>
            <button class="to-right" aria-label="Scroll right"><svg><use href="#i-arrow"/></svg></button>
          </div>
        </div>
      </div>
      <div class="statusline"><span class="status-cell"></span></div>
      <form class="toolbar serial">
        <label for="port">Port:</label>
        <span class="select port-select is-gray"><select id="port"><option>COM5 (U</option></select><svg><use href="#i-chevron"/></svg></span>
        <label for="speed">Speed:</label>
        <span class="select speed-select"><select id="speed"><option>9600</option></select><svg><use href="#i-chevron"/></svg></span>
        <label for="format"><u>F</u>ormat:</label>
        <span class="select format-select is-gray"><select id="format"><option>Unformatted Text</option></select><svg><use href="#i-chevron"/></svg></span>
        <label class="check"><input type="checkbox" checked>Reset</label>
        <label class="check"><input type="checkbox" checked>Log</label>
        <button class="push push-icon" type="button" aria-label="Save log"><svg><use href="#i-log"/></svg></button>
        <button class="push push-connect" type="button"><svg><use href="#i-connect"/></svg>Connect</button>
        <span class="spacer"></span>
        <button class="tool" type="button" aria-label="Settings"><svg><use href="#i-tools"/></svg></button>
        <button class="tool" type="button" aria-label="Stop"><svg><use href="#i-stop"/></svg></button>
      </form>
    </section>

    <aside class="palette">
      <div class="toolbar palette-toolbar">
        <input class="field palette-search" type="text" value="multi" aria-label="Search components">
        <button class="tool" aria-label="Clear search"><svg><use href="#i-clear"/></svg></button>
        <button class="tool is-on" aria-label="Wizard"><svg><use href="#i-wizard"/></svg></button>
        <button class="tool-caret" aria-label="Wizard list"><svg><use href="#i-caret"/></svg></button>
        <button class="tool" aria-label="Categories"><svg><use href="#i-folder"/></svg></button>
        <button class="tool" aria-label="Expand all"><svg><use href="#i-expand"/></svg></button>
        <button class="tool" aria-label="Collapse all"><svg><use href="#i-collapse"/></svg></button>
        <button class="tool" aria-label="Options"><svg><use href="#i-tools"/></svg></button>
      </div>
      <div class="palette-main">
        <div class="palette-list">
          <section class="group">
            <h3><svg><use href="#c-calc"/></svg>Math</h3>
            <div class="tiles cols-4">
              <button class="tile" aria-label="Multiply Integer"><svg><use href="#c-123"/><use href="#c-xa"/></svg></button>
              <button class="tile" aria-label="Multi Add"><svg><use href="#c-plus"/><use href="#c-123"/><use href="#c-star"/></svg></button>
              <button class="tile" aria-label="Multiply Unsigned"><svg><use href="#c-plus" x="4"/><use href="#c-123"/><use href="#c-xa"/></svg></button>
              <button class="tile" aria-label="Multiply Analog"><svg><use href="#c-analog"/><use href="#c-star"/></svg></button>
              <button class="tile" aria-label="Multiply Analog By Value"><svg><use href="#c-analog"/><use href="#c-xag"/></svg></button>
              <button class="tile" aria-label="Multiply"><svg><use href="#c-123"/><use href="#c-star"/></svg></button>
            </div>
          </section>

          <section class="group">
            <h3><svg viewBox="0 8 32 32"><use href="#c-123" width="32" height="32"/></svg>Integer</h3>
            <div class="tiles cols-4">
              <button class="tile" aria-label="Multiply By Value"><svg><use href="#c-123"/><use href="#c-xa"/></svg></button>
              <button class="tile" aria-label="Add Multi Merger"><svg><use href="#c-123up"/><use href="#c-plus"/><use href="#c-mergeb"/></svg></button>
              <button class="tile" aria-label="Multiply Integer"><svg><use href="#c-123"/><use href="#c-star"/></svg></button>
              <button class="tile" aria-label="Multi Merger"><svg><use href="#c-123up"/><use href="#c-merge"/></svg></button>
              <button class="tile" aria-label="Multi Source"><svg><use href="#c-123up"/><use href="#c-mergeb"/></svg></button>
            </div>
          </section>

          <div class="group-row">
            <div class="group-col">
              <section class="group is-active">
                <h3><svg><use href="#c-sync"/></svg>Synchronization</h3>
                <div class="tiles cols-2">
                  <button class="tile" aria-label="Clock Multi Merger"><svg><use href="#c-metro"/><use href="#c-merge"/></svg></button>
                  <div class="tile-wrap">
                    <button class="tile is-hot" aria-label="Clock Multi Source"><svg><use href="#c-metro"/><use href="#c-split"/></svg></button>
                    <div class="tooltip" role="tooltip">
                      <p>Clock Multi Source</p>
                      <div class="mini-node">
                        <div class="mini-title"><svg><use href="#c-split"/></svg>ArduinoClockMultiSource</div>
                        <div class="mini-body">
                          <span class="mini-pin"><i></i><svg><use href="#p-clock"/></svg>In</span>
                          <div class="mini-out">
                            <span>Out</span>
                            <span class="mini-pin">Pin [0]<svg><use href="#p-clock"/></svg><i></i></span>
                            <span class="mini-pin">Pin [1]<svg><use href="#p-clock"/></svg><i></i></span>
                          </div>
                        </div>
                      </div>
                    </div>
                  </div>
                </div>
              </section>
              <section class="group">
                <h3><svg viewBox="0 -5 32 32"><use href="#c-abc" width="32" height="32"/></svg>Text</h3>
                <div class="tiles cols-2">
                  <button class="tile" aria-label="Text Multi Source"><svg><use href="#c-abc"/><use href="#c-mergeb"/></svg></button>
                  <button class="tile" aria-label="Text Multi Merger"><svg><use href="#c-abc"/><use href="#c-merge"/></svg></button>
                </div>
              </section>
            </div>
            <section class="group">
              <h3><svg viewBox="0 0 32 32"><use href="#c-plus"/><use href="#c-123"/></svg>Unsigned</h3>
              <div class="tiles cols-1">
                <button class="tile" aria-label="Unsigned Multi Merger"><svg><use href="#c-123up"/><use href="#c-plus"/><use href="#c-merge"/></svg></button>
                <button class="tile" aria-label="Unsigned Multiply By Value"><svg><use href="#c-123"/><use href="#c-xa"/></svg></button>
                <button class="tile" aria-label="Unsigned Multiply"><svg><use href="#c-123"/><use href="#c-star"/></svg></button>
              </div>
            </section>
          </div>

          <section class="group">
            <h3><svg><use href="#c-wheel"/></svg>Color</h3>
            <div class="tiles cols-3">
              <button class="tile" aria-label="Color Merger"><svg><use href="#c-white"/><use href="#c-wheel" x="9" y="5" width="24" height="24"/><use href="#c-merge"/></svg></button>
              <button class="tile" aria-label="Color Multi Source"><svg><use href="#c-wheel" x="3" y="-2" width="26" height="26"/><use href="#c-mergeb"/></svg></button>
              <button class="tile" aria-label="Color Multi Merger"><svg><use href="#c-wheel" x="3" y="-2" width="26" height="26"/><use href="#c-merge"/></svg></button>
            </div>
          </section>

          <section class="group">
            <h3><svg><use href="#c-analog"/></svg>Analog</h3>
            <div class="tiles cols-4">
              <button class="tile" aria-label="Multiply Analog"><svg><use href="#c-analog"/><use href="#c-star"/></svg></button>
              <button class="tile" aria-label="Multiply Analog By Value"><svg><use href="#c-analog"/><use href="#c-xag"/></svg></button>
              <button class="tile" aria-label="Analog Multi Merger"><svg><use href="#c-analog"/><use href="#c-merge"/></svg></button>
              <button class="tile" aria-label="Analog Multi Source"><svg><use href="#c-analog"/><use href="#c-mergeb"/></svg></button>
            </div>
          </section>

          <section class="group">
            <h3><svg><use href="#c-date"/></svg>Date/Time</h3>
            <div class="tiles cols-2">
              <button class="tile" aria-label="Date/Time Multi Source"><svg><use href="#c-date"/><use href="#c-mergeb"/></svg></button>
              <button class="tile" aria-label="Date/Time Multi Merger"><svg><use href="#c-date"/><use href="#c-merge"/></svg></button>
            </div>
          </section>

          <section class="group">
            <h3><svg><use href="#c-filter"/></svg>Filters</h3>
            <div class="nested">
              <section class="group">
                <h3><svg><use href="#c-calc"/></svg>Math</h3>
                <div class="tiles cols-2">
                  <button class="tile" aria-label="Filter Multiply By Value"><svg><use href="#c-analog"/><use href="#c-xag"/></svg></button>
                  <button class="tile" aria-label="Filter Multiply"><svg><use href="#c-analog"/><use href="#c-star"/></svg></button>
                </div>
              </section>
              <section class="group">
                <h3><svg><use href="#c-calc"/></svg>Math</h3>
                <div class="tiles cols-2"></div>
              </section>
            </div>
          </section>
        </div>
        <div class="vscroll palette-vscroll">
          <button aria-label="Scroll up"><svg><use href="#i-arrow"/></svg></button>
          <div class="track"><div class="thumb"></div></div>
          <button class="flip" aria-label="Scroll down"><svg><use href="#i-arrow"/></svg></button>
        </div>
      </div>
      <div class="toolbar ads">
        <strong>Arduino eBay Ads:</strong>
        <button class="tool" aria-label="Ads options"><svg><use href="#i-tools"/></svg></button>
        <button class="tool" aria-label="Close ads"><svg><use href="#i-power"/></svg></button>
      </div>
    </aside>
  </main>
</body>
</html>
```

FILE: styles.css
```css
* {
  box-sizing: border-box;
}

body {
  margin: 0;
  height: 100vh;
  display: flex;
  flex-direction: column;
  overflow: hidden;
  background: #f0f0f0;
  border: 1px solid #2883cd;
  border-top: 0;
  color: #000;
  font: 11px/14px 'DejaVu Sans Condensed', 'Noto Sans', sans-serif;
}

h1, h2, h3, p {
  margin: 0;
  font-weight: normal;
}

button {
  border: 0;
  padding: 0;
  background: none;
  font: inherit;
  color: inherit;
}

svg {
  display: block;
  flex: none;
}

.paints {
  position: absolute;
  width: 0;
  height: 0;
}

.sprite {
  display: none;
}

.spacer {
  flex: 1;
}

/* title bar and menu */

.titlebar {
  display: flex;
  align-items: center;
  height: 31px;
  padding-left: 8px;
  background: #2883cd;
  color: #fff;
}

.logo {
  width: 16px;
  height: 16px;
}

.window-title {
  flex: 1;
  margin-left: 5px;
  font: 12px/16px 'Open Sans', sans-serif;
}

.win-btn {
  display: grid;
  place-items: center;
  width: 46px;
  height: 31px;
}

.win-btn svg {
  width: 10px;
  height: 10px;
}

.menubar {
  display: flex;
  gap: 13px;
  height: 19px;
  padding-left: 7px;
  background: #fff;
  font: 12px/19px 'Open Sans', sans-serif;
}

.menubar a {
  color: #000;
  text-decoration: none;
}

/* toolbars */

.toolbar {
  display: flex;
  align-items: center;
  background: #faf0e6;
}

.main-toolbar {
  height: 26px;
  padding-left: 2px;
}

.tool-group {
  display: flex;
}

.gap-s {
  margin-left: 5px;
}

.gap-m {
  margin-left: 13px;
}

.gap-l {
  margin-left: 40px;
}

.tool {
  display: grid;
  place-items: center;
  flex: none;
  width: 24px;
  height: 22px;
}

.tool svg {
  width: 16px;
  height: 16px;
}

.tool.is-on {
  background: #cadeed;
  border: 1px solid #90c8f6;
}

.tool-caret {
  display: grid;
  place-items: center;
  width: 7px;
}

.tool-caret svg {
  width: 7px;
  height: 4px;
}

.tool-caret.is-off {
  color: #999;
}

.zoom-label {
  margin-left: 7px;
  width: 36px;
}

.field {
  height: 21px;
  padding: 0 2px;
  border: 1px solid #7a7a7a;
  background: #fff;
  font: inherit;
}

.select {
  display: grid;
  align-items: center;
}

.select > * {
  grid-area: 1 / 1;
}

.select select {
  appearance: none;
  width: 100%;
  height: 21px;
  padding: 0 16px 0 2px;
  border: 1px solid #7a7a7a;
  border-radius: 0;
  background: #fff;
  color: #000;
  font: inherit;
}

.select.is-gray select {
  background: #e1e1e1;
  border-color: #adadad;
}

.select svg {
  justify-self: end;
  width: 10px;
  height: 6px;
  margin-right: 4px;
  color: #444;
  pointer-events: none;
}

.zoom-select {
  width: 71px;
  margin-right: 3px;
}

/* layout */

.workspace {
  flex: 1;
  min-height: 0;
  display: grid;
  grid-template-columns: 268px minmax(0, 1fr) 260px;
  column-gap: 4px;
}

.left, .center, .palette {
  display: flex;
  flex-direction: column;
  min-width: 0;
  min-height: 0;
}

/* navigator and properties */

.navigator {
  background: #d3d3d3;
}

.map {
  width: 195px;
  height: 225px;
}

.tabs {
  display: flex;
  padding-top: 3px;
}

.tab {
  display: flex;
  align-items: center;
  gap: 5px;
  height: 21px;
  padding: 0 7px;
  background: #fff;
  border: 1px solid #dcdcdc;
  border-bottom: 0;
}

.tab svg {
  width: 16px;
  height: 16px;
}

.props {
  flex: 1;
  display: flex;
  flex-direction: column;
  margin-right: 2px;
  padding: 3px;
  padding-right: 1px;
  background: #fff;
  border: 1px solid #dcdcdc;
  border-left: 0;
}

.props-toolbar {
  height: 25px;
  padding: 0 1px 0 7px;
}

.props-toolbar .tool {
  width: 23px;
}

.props-toolbar .is-on {
  width: 22px;
  height: 21px;
}

.props-filter {
  width: 93px;
}

.props-body {
  flex: 1;
  background: #f0f0f0;
}

/* editor with rulers */

.center {
  margin-right: 1px;
}

.editor {
  flex: 1;
  min-height: 0;
  display: grid;
  grid-template: 20px minmax(0, 1fr) / 22px minmax(0, 1fr) 17px;
  gap: 2px;
  padding-top: 2px;
}

.corner {
  height: 20px;
  background: #808080;
}

.corner-end {
  width: 19px;
  justify-self: end;
}

.ruler-top {
  display: flex;
  overflow: hidden;
  padding-left: 32px;
  background:
    linear-gradient(90deg, #000 1px, transparent 1px) 112px 100% / 160px 7px repeat-x,
    linear-gradient(90deg, #000 1px, transparent 1px) 32px 100% / 160px 5px repeat-x,
    linear-gradient(90deg, #000 1px, transparent 1px) 0 100% / 16px 3px repeat-x,
    #fff;
  font: 10px/14px 'Liberation Sans', Arial, sans-serif;
}

.ruler-top span {
  flex: none;
  width: 160px;
  text-align: center;
}

.ruler-side {
  display: flex;
  flex-direction: column;
  gap: 2px;
  min-height: 0;
}

.ruler-left {
  flex: 1;
  min-height: 0;
  overflow: hidden;
  background:
    linear-gradient(#000 1px, transparent 1px) 100% -2px / 7px 160px repeat-y,
    linear-gradient(#000 1px, transparent 1px) 100% 78px / 5px 160px repeat-y,
    linear-gradient(#000 1px, transparent 1px) 100% 14px / 3px 16px repeat-y,
    #fff;
  font: 10px/14px 'Liberation Sans', Arial, sans-serif;
}

.ruler-left span {
  display: block;
  width: 16px;
  height: 160px;
  text-align: center;
  writing-mode: vertical-rl;
  transform: rotate(180deg);
}

.ruler-left span:first-child {
  margin-top: -82px;
}

.frame {
  grid-column: 2 / 4;
  display: grid;
  grid-template: minmax(0, 1fr) 17px / minmax(0, 1fr) 17px;
  min-height: 0;
  border: 2px solid #f8f8f8;
  border-top-color: #696969;
  border-left-color: #696969;
}

.canvas {
  position: relative;
  overflow: hidden;
  background: #fff;
  font: 12px/16px 'Liberation Sans', Arial, sans-serif;
}

.backdrop {
  width: 100%;
  height: 100%;
}

.node {
  position: absolute;
  height: 49px;
  background: #b0c4de;
  border: 1px solid #000;
  border-radius: 5px;
}

.node-repeat {
  left: 48px;
  top: 430px;
  width: 81px;
}

.node-sine1 {
  left: 352px;
  top: 446px;
  width: 145px;
}

.node-sine2 {
  left: 352px;
  top: 526px;
  width: 145px;
}

.node-title {
  display: flex;
  align-items: center;
  height: 22px;
  border-bottom: 1px solid #000;
  border-radius: 4px 4px 0 0;
  background: linear-gradient(#ffcbb6, #ffb395 50%, #ffa07a 51%);
  font-size: 11px;
  font-weight: bold;
  white-space: nowrap;
}

.node-title svg {
  width: 16px;
  height: 16px;
  margin: 0 4px 0 3px;
}

.pins {
  display: flex;
  margin-top: 1px;
}

.pin {
  display: flex;
  align-items: center;
  height: 16px;
}

.pin svg {
  width: 16px;
  height: 16px;
  margin: 0 1px;
}

.pin.out {
  margin-left: auto;
}

.pin.out svg {
  margin: 0;
}

.port {
  flex: none;
  width: 7px;
  height: 7px;
  background: #fff;
  border: 1px solid #000;
  margin-left: -4px;
}

.out .port {
  margin: 0 -4px 0 0;
}

.i32 {
  width: 18px;
  color: #f0f;
  font: 900 12px/16px Roboto, sans-serif;
}

.board {
  position: absolute;
  left: 560px;
  top: -26px;
  width: 406px;
  display: grid;
  gap: 1px;
  padding: 1px 0 8px;
  background: #b0c4de;
  border: solid #000;
  border-width: 0 1px 1px;
  border-radius: 0 0 5px 5px;
}

.slot {
  height: 31px;
  border: solid #000;
  border-width: 1px 0;
  background: #d3d3d3;
  white-space: nowrap;
}

.slot-2 {
  height: 47px;
}

.slot-3 {
  height: 63px;
}

.slot.is-used {
  background: #87cefa;
}

.slot-title {
  display: flex;
  align-items: center;
  gap: 1px;
  height: 14px;
  font-size: 11px;
}

.slot-title svg {
  width: 16px;
  height: 16px;
}

.at-5 {
  padding-left: 4px;
}

.at-105 {
  padding-left: 105px;
}

.at-123 {
  padding-left: 123px;
}

.at-130 {
  padding-left: 130px;
}

.at-134 {
  padding-left: 133px;
}

/* scrollbars */

.vscroll, .hscroll {
  display: flex;
  background: #f0f0f0;
}

.vscroll {
  flex-direction: column;
  width: 17px;
}

.vscroll button, .hscroll button {
  display: grid;
  place-items: center;
  flex: none;
  width: 17px;
  height: 17px;
}

.vscroll svg, .hscroll svg {
  width: 8px;
  height: 6px;
}

.flip {
  transform: rotate(180deg);
}

.to-left {
  transform: rotate(-90deg);
}

.to-right {
  transform: rotate(90deg);
}

.track {
  flex: 1;
  display: flex;
}

.vscroll .track {
  flex-direction: column;
}

.thumb {
  background: #cdcdcd;
}

.canvas-vscroll .thumb {
  height: 48%;
  margin: auto 1px 24px;
  background: #c0c0c0;
}

.hscroll .thumb {
  width: 53%;
  margin: 1px 0 1px 105px;
}

/* serial bar */

.statusline {
  display: flex;
  height: 19px;
  margin-top: 1px;
  border-top: 1px solid #d7d7d7;
}

.status-cell {
  width: 69px;
  margin: 1px 0;
  border-right: 1px solid #d7d7d7;
}

.serial {
  height: 29px;
  padding: 0 2px 3px 4px;
}

.serial .select {
  margin: 0 6px 0 3px;
}

.port-select {
  width: 63px;
}

.speed-select {
  width: 57px;
}

.format-select {
  width: 145px;
}

.check {
  display: flex;
  align-items: center;
  margin-right: 6px;
}

.check + .check {
  margin-right: 3px;
}

.check input {
  appearance: none;
  width: 13px;
  height: 13px;
  margin: 0 3px 0 0;
  border: 1px solid #333;
  background: #fff;
  display: grid;
  place-items: center;
}

.check input:checked::before {
  content: "";
  width: 4px;
  height: 8px;
  margin-top: -2px;
  border: solid #222;
  border-width: 0 1px 1px 0;
  transform: rotate(40deg);
}

.push {
  display: flex;
  align-items: center;
  justify-content: center;
  gap: 3px;
  height: 23px;
  background: #e1e1e1;
  border: 1px solid #adadad;
}

.push svg {
  width: 16px;
  height: 16px;
}

.push-icon {
  width: 23px;
  margin-right: 8px;
}

.push-connect {
  width: 88px;
}

.serial .tool {
  width: 22px;
}

/* component palette */

.palette-toolbar {
  height: 27px;
  padding: 2px 0 0 2px;
}

.palette-toolbar .tool {
  width: 22px;
  height: 21px;
}

.palette-search {
  width: 111px;
  margin-right: 3px;
}

.palette-main {
  flex: 1;
  min-height: 0;
  display: flex;
}

.palette-list {
  flex: 1;
  display: flex;
  flex-direction: column;
  align-items: flex-start;
  gap: 7px;
  padding: 4px 0 0 2px;
  overflow: hidden;
  font: 11px/16px 'Liberation Sans', Arial, sans-serif;
}

.group {
  flex: none;
  background: #fff;
  border: 2px solid #000;
  border-radius: 6px;
  box-shadow: 2px 2px 2px #b0b0b0;
}

.group h3 {
  display: flex;
  align-items: center;
  gap: 4px;
  height: 19px;
  padding-left: 2px;
  border-bottom: 1px solid #000;
  border-radius: 4px 4px 0 0;
  background: linear-gradient(#b2b2b2, #929292 50%, #808080 51%);
  color: #fff;
  font-size: 11px;
}

.group h3 svg {
  width: 16px;
  height: 16px;
}

.group.is-active {
  border-color: #148214;
}

.group.is-active h3 {
  border-color: #148214;
  background: linear-gradient(#b8fbb8, #98f098 50%, #84e684 51%);
}

.tiles {
  display: grid;
  gap: 7px;
  padding: 10px 31px 11px 9px;
}

.cols-1 {
  grid-template-columns: 37px;
}

.cols-2 {
  grid-template-columns: repeat(2, 37px);
}

.cols-3 {
  grid-template-columns: repeat(3, 37px);
}

.cols-4 {
  grid-template-columns: repeat(4, 37px);
}

.nested {
  display: grid;
  gap: 7px;
  padding: 10px 31px 11px 9px;
}

.group-row {
  display: flex;
  gap: 7px;
}

.group-col {
  display: grid;
  gap: 7px;
}

.tile {
  display: grid;
  place-items: center;
  width: 37px;
  height: 37px;
  border: 1px solid #000;
  border-radius: 3px;
  background: linear-gradient(#bebebe, #9b9b9b 50%, #7f7f7f 51%, #888);
  box-shadow: 2px 2px 1px #c4c4c4;
}

.tile svg {
  width: 32px;
  height: 32px;
  filter: drop-shadow(1px 1px 1px rgba(0, 0, 0, .4));
}

.tile.is-hot {
  border-color: #00f;
  background: linear-gradient(#d5ebf3, #add8e6);
}

.tile-wrap {
  position: relative;
}

.tooltip {
  position: absolute;
  z-index: 2;
  left: 1px;
  top: 40px;
  width: 105px;
  height: 66px;
  padding: 1px 6px;
  background: rgba(255, 255, 255, .8);
  border: 1px solid #a0a0a0;
  box-shadow: 2px 2px 2px rgba(0, 0, 0, .25);
  white-space: nowrap;
}

.mini-node {
  width: 85px;
  height: 43px;
  border: 1px solid #333;
  border-radius: 3px;
  background: #b0c4de;
  font-size: 6px;
  line-height: 8px;
}

.mini-title {
  display: flex;
  align-items: center;
  gap: 2px;
  height: 12px;
  border-bottom: 1px solid #333;
  background: #ffa07a;
}

.mini-title svg {
  width: 9px;
  height: 9px;
}

.mini-body {
  display: flex;
  justify-content: space-between;
}

.mini-out {
  width: 30px;
  height: 26px;
  padding-left: 1px;
  border: 1px solid #333;
  background: #87cefa;
}

.mini-out > span {
  height: 8px;
}

.mini-out > span:first-child {
  display: block;
}

.mini-pin {
  display: flex;
  align-items: center;
  height: 9px;
}

.mini-pin svg {
  width: 7px;
  height: 7px;
}

.mini-pin i {
  flex: none;
  width: 4px;
  height: 4px;
  margin-left: -2px;
  border: 1px solid #000;
  background: #fff;
}

.mini-out i {
  margin-left: 0;
}

.palette-vscroll .thumb {
  height: 76%;
  margin: 0 1px;
}

.ads {
  justify-content: flex-end;
  height: 25px;
  padding-right: 1px;
}

.ads strong {
  margin-right: 24px;
}

.ads .tool {
  width: 22px;
}

/* text inside icons */

.t-num {
  font: bold 20px 'Liberation Sans', sans-serif;
}

.t-xa {
  font: bold 20px 'Liberation Sans', sans-serif;
}

.t-mul {
  font-size: 17px;
}

.t-abc {
  font: bold 15px 'Liberation Sans', sans-serif;
}

.t-day {
  font: bold 13px 'Liberation Sans', sans-serif;
}

.t-spi {
  font: bold 9px 'Liberation Sans', sans-serif;
  fill: #9c0c14;
}

.n1 {
  fill: #b8202a;
}

.n1o {
  fill: #d8702c;
}

.n2 {
  fill: #2f76a8;
}

.n3 {
  fill: #6fae2c;
}

.xa-red {
  fill: #e02228;
}

.xa-green {
  fill: #4fdc6c;
}
```
